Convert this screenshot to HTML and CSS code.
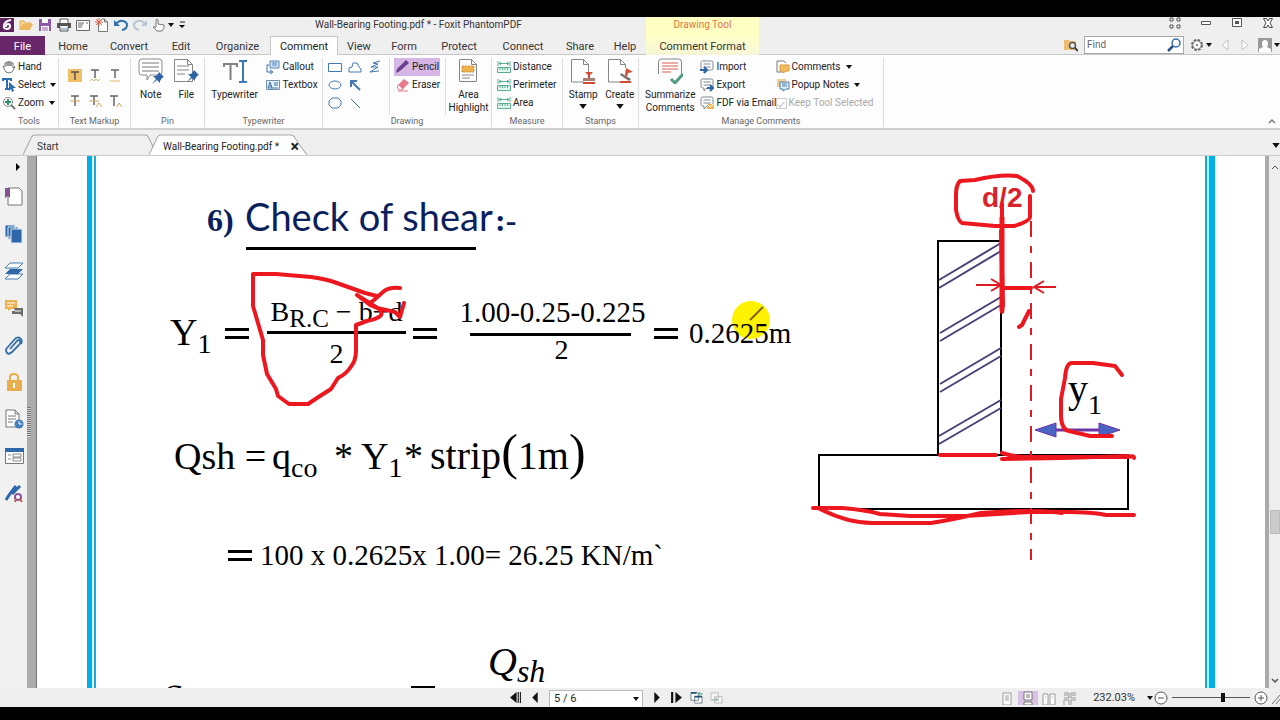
FILE: index.html
```html
<!DOCTYPE html>
<html lang="en">
<head>
<meta charset="utf-8">
<title>Wall-Bearing Footing.pdf * - Foxit PhantomPDF</title>
<link rel="stylesheet" href="styles.css">
</head>
<body>
<svg width="0" height="0" class="defs" aria-hidden="true">
  <symbol id="caret" viewBox="0 0 6 4"><path d="M0 0h6L3 4z" fill="#111"/></symbol>
  <symbol id="pin" viewBox="0 0 12 12"><path d="M7 0l5 5-2 1-2 3v2L5 8l-5 4 4-5L1 4h3l2-2z" fill="#2c64a5"/></symbol>
  <symbol id="ruler" viewBox="0 0 14 12"><path d="M1 0v5M13 0v5M2 2.500h10M4 1L2 2.500 4 4M10 1l2 1.500L10 4" stroke="#5aae92" fill="none"/><path d="M.5 6.500h13v5H.5zM3 7v2M5.500 7v2M8 7v2M10.500 7v2" stroke="#5aae92" fill="#e4f4ee"/></symbol>
  <symbol id="bubble" viewBox="0 0 14 14"><path d="M2.500 1h9Q13 1 13 2.500v6Q13 10 11.500 10H7l-3 3v-3H2.500Q1 10 1 8.500v-6Q1 1 2.500 1zM3.500 4h7M3.500 7h7" fill="#fff" stroke="#7c8792"/></symbol>
</svg>

<div class="app">
  <header>
    <div class="titlebar">
      <div class="quick">
        <svg viewBox="0 0 14 14"><path fill="#5c2560" d="M0 0h14v14H0z"/><path d="M11 2Q5 3 4 7q-1 4 3 4 3 0 3-3 0-2-2-2-2 0-2 3" fill="none" stroke="#fff" stroke-width="2"/></svg>
        <button aria-label="Open"><svg viewBox="0 0 14 14"><path d="M1 12V3h4l1 2h6v2" fill="#f6d596" stroke="#e5ac4e"/><path d="M1 12l3-6h10l-3 6z" fill="#edb75d"/></svg></button>
        <button aria-label="Save"><svg viewBox="0 0 14 14"><path d="M1 1h12v12H1z" fill="#8c5aa8"/><path d="M4 1h6v4H4zM3 8h8v5H3z" fill="#fff"/><path d="M4 10h6M4 12h6" stroke="#8c5aa8"/></svg></button>
        <button aria-label="Print"><svg viewBox="0 0 14 14"><path d="M3 5V1h8v4M3 9v4h8V9" fill="#fff" stroke="#555"/><path d="M0 5h14v5h-3V8H3v2H0z" fill="#555"/><path d="M4 11h6" stroke="#4d83bf"/></svg></button>
        <button aria-label="Email"><svg viewBox="0 0 14 14"><path d="M.5 2.500h13v10H.5zM2 5h6M2 7h5M2 9h4M10 5h2" fill="#fff" stroke="#666"/></svg></button>
        <button aria-label="Create"><svg viewBox="0 0 14 14"><path d="M3.500 5v8.500h9V4l-3-3H7M9.500 1v3h3" fill="#fff" stroke="#777"/><path d="M4 0v8M0 4h8M1 1l6 6M7 1L1 7" stroke="#d9604b"/></svg></button>
        <button aria-label="Undo"><svg viewBox="0 0 14 14"><path d="M2 6q3-4 7-3 4 1 4 4 0 4-5 5" fill="none" stroke="#2f70ad" stroke-width="2"/><path d="M0 2v6h6z" fill="#2f70ad"/></svg></button>
        <button aria-label="Redo"><svg viewBox="0 0 14 14"><path d="M12 6Q9 2 5 3 1 4 1 7q0 4 5 5" fill="none" stroke="#b9c5d3" stroke-width="2"/><path d="M14 2v6H8z" fill="#b9c5d3"/></svg></button>
        <button class="drop" aria-label="Touch mode"><svg viewBox="0 0 14 14"><path d="M4 9V2q1-2 2 0v4l6 1v3l-2 3H5L1 9q1-1 3 1" fill="#fff" stroke="#777"/></svg><svg class="caret"><use href="#caret"/></svg></button>
        <button aria-label="Customize" class="small"><svg viewBox="0 0 6 8"><path d="M1 1h5" stroke="#222"/><path d="M0 4h6L3 7z"/></svg></button>
      </div>
      <h1 class="apptitle">Wall-Bearing Footing.pdf * - Foxit PhantomPDF</h1>
      <div class="context-title">Drawing Tool</div>
      <div class="window-controls">
        <button aria-label="Layout"><svg viewBox="0 0 12 12"><g fill="none" stroke="#555"><path d="M1 1h3v3H1zM8 1h3v3H8zM1 8h3v3H1zM8 8h3v3H8z"/></g></svg></button>
        <button aria-label="Minimize"><svg viewBox="0 0 12 12"><path d="M1.500 4.500h9v3h-9z" fill="#fff" stroke="#555"/></svg></button>
        <button aria-label="Restore"><svg viewBox="0 0 12 12"><path d="M1.500 1.500h9v8h-9z" fill="#fff" stroke="#555"/><path d="M4 4h4v3H4z" fill="#555"/></svg></button>
        <button aria-label="Close"><svg viewBox="0 0 12 12"><path d="M1.500 1.500h3L6 4l1.500-2.500h3L8 6l2.500 4.500h-3L6 8l-1.500 2.500h-3L4 6z" fill="#fff" stroke="#444"/></svg></button>
      </div>
    </div>

    <div class="menubar">
      <nav class="menus">
        <button class="file">File</button><button>Home</button><button>Convert</button><button>Edit</button><button>Organize</button><button class="active">Comment</button><button>View</button><button>Form</button><button>Protect</button><button>Connect</button><button>Share</button><button>Help</button><button class="context">Comment Format</button>
      </nav>
      <div class="finder">
        <svg class="i14" viewBox="0 0 14 14"><path d="M0 2h5l1 1h6v9H0z" fill="#ecbd73"/><circle cx="8.500" cy="7.500" r="3" fill="#eee" stroke="#555" stroke-width="1.500"/><path d="M11 10l3 3" stroke="#444" stroke-width="2"/></svg>
        <label class="findbox"><input type="text" placeholder="Find" aria-label="Find"><svg class="i14" viewBox="0 0 14 14"><circle cx="9" cy="5" r="4" fill="#fff" stroke="#2f6db0" stroke-width="1.500"/><path d="M6 8l-5 5" stroke="#2b4f80" stroke-width="2.500"/></svg></label>
        <button class="drop" aria-label="Settings"><svg class="i14" viewBox="0 0 14 14"><circle cx="7" cy="7" r="5" fill="none" stroke="#666" stroke-width="2" stroke-dasharray="2.500 1.430"/><circle cx="7" cy="7" r="4.200" fill="#fff" stroke="#777"/><circle cx="7" cy="7" r="1" fill="#666"/></svg><svg class="caret"><use href="#caret"/></svg></button>
        <button aria-label="Previous"><svg class="i14" viewBox="0 0 14 14"><path d="M10 2v10L4 7z" fill="#fafafa" stroke="#c3c3c3"/></svg></button>
        <button aria-label="Next"><svg class="i14" viewBox="0 0 14 14"><path d="M4 2v10l6-5z" fill="#fafafa" stroke="#c3c3c3"/></svg></button>
        <button class="drop" aria-label="Account"><svg class="i14" viewBox="0 0 14 14"><path d="M0 0h14v14H0z" fill="#999"/><path d="M7 2q3 0 3 4 0 2-1 3l4 2v3H1v-3l4-2Q4 8 4 6q0-4 3-4z" fill="#fff"/></svg><svg class="caret"><use href="#caret"/></svg></button>
      </div>
    </div>
  </header>

  <section class="ribbon">
    <div class="group">
      <div class="body"><div class="stack">
        <button><svg class="i14" viewBox="0 0 14 14"><path d="M4 12L1 7q0-2 2 0V3q1-1 2 0v3-4q1-1 2 0v4-4q1-1 2 0v4-3q1-1 2 0v5q2-3 2-1l-3 5q-3 2-6 0z" fill="#fff" stroke="#777"/></svg>Hand</button>
        <button><svg class="i14" viewBox="0 0 14 14"><path d="M1 3V1h8v2M5 1v10M3 11h4" fill="none" stroke="#2c70ad" stroke-width="2"/><path d="M7 4v9l2-2 1 3 2-1-1-3h3z" fill="#2c70ad"/></svg>Select<svg class="caret"><use href="#caret"/></svg></button>
        <button><svg class="i14" viewBox="0 0 14 14"><circle cx="6" cy="6" r="4.500" fill="#fff" stroke="#888"/><path d="M3 6h6M6 3v6" stroke="#26936a" stroke-width="2"/><path d="M9 9l4 4" stroke="#777" stroke-width="2"/></svg>Zoom<svg class="caret"><use href="#caret"/></svg></button>
      </div></div>
      <h2>Tools</h2>
    </div>
    <div class="group">
      <div class="body"><div class="markup">
        <button aria-label="Highlight"><svg viewBox="0 0 14 14"><path d="M0 0h14v13H0z" fill="#f2bf69"/><path d="M3 3h8M7 3v8" stroke="#555" stroke-width="1.500"/></svg></button>
        <button aria-label="Squiggly"><svg viewBox="0 0 14 14"><path d="M3 1h8M7 1v8" stroke="#666" stroke-width="1.500"/><path d="M2 12l2-2 2 2 2-2 2 2 2-2" fill="none" stroke="#e3b86c"/></svg></button>
        <button aria-label="Underline"><svg viewBox="0 0 14 14"><path d="M3 1h8M7 1v8" stroke="#666" stroke-width="1.500"/><path d="M2 12h10" stroke="#e3b86c"/></svg></button>
        <button aria-label="Strikeout"><svg viewBox="0 0 14 14"><path d="M3 2h8M7 2v10" stroke="#666" stroke-width="1.500"/><path d="M2 7h10" stroke="#d4a45c"/></svg></button>
        <button aria-label="Replace"><svg viewBox="0 0 14 14"><path d="M2 2h8M6 2v9" stroke="#666" stroke-width="1.500"/><path d="M1 7h10M8 13l3-4 3 4" fill="none" stroke="#d4a45c"/></svg></button>
        <button aria-label="Insert"><svg viewBox="0 0 14 14"><path d="M2 2h8M6 2v10" stroke="#666" stroke-width="1.500"/><path d="M9 13l2-4 3 4" fill="none" stroke="#d4a45c"/></svg></button>
      </div></div>
      <h2>Text Markup</h2>
    </div>
    <div class="group">
      <div class="body bigs">
        <button class="big"><svg viewBox="0 0 26 26"><path d="M4 1h17q3 0 3 3v10q0 3-3 3h-9l-3 5v-5H4q-3 0-3-3V4q0-3 3-3z" fill="#fff" stroke="#8b8b8b"/><path d="M4 5h17M4 9h17M4 13h17" stroke="#777"/><use href="#pin" x="14" y="14" width="12" height="12"/></svg>Note</button>
        <button class="big"><svg viewBox="0 0 26 26"><path d="M1.500 1.500h13l5 5v17h-18zM14.500 1.500v5h5" fill="#fff" stroke="#858585"/><path d="M4 8h12M4 12h12M4 16h8" stroke="#858585"/><use href="#pin" x="14" y="12" width="12" height="12"/></svg>File</button>
      </div>
      <h2>Pin</h2>
    </div>
    <div class="group">
      <div class="body bigs">
        <button class="big"><svg viewBox="0 0 26 26"><path d="M2 6h13M8.500 6v16M2 5v4M15 5v4" stroke="#808080" stroke-width="2"/><path d="M17 3h3l1 1 1-1h3M21 4v19M17 24h3l1-1 1 1h3" fill="none" stroke="#3578b4" stroke-width="2"/></svg>Typewriter</button>
        <div class="stack">
          <button><svg class="i14" viewBox="0 0 14 14"><path d="M4 1h9v7H4zM6 3h5M6 5h5" fill="#cfe0f2" stroke="#5b87b8"/><path d="M3 5H1v7h5M4 10l3 2-3 2" fill="none" stroke="#3c70aa"/></svg>Callout</button>
          <button><svg class="i14" viewBox="0 0 14 14"><path d="M.5 2.500h13v9H.5z" fill="#e9f2fb" stroke="#6f8fb0"/><path d="M2 10l2-6 2 6M3 8h3M8 5h4M8 7h4M2 10h10" fill="none" stroke="#3c70aa"/></svg>Textbox</button>
        </div>
      </div>
      <h2>Typewriter</h2>
    </div>
    <div class="group">
      <div class="body drawing">
        <div class="shapes">
          <button aria-label="Rectangle"><svg viewBox="0 0 14 14"><path d="M.5 3.500h13v8H.5z"/></svg></button>
          <button aria-label="Polygon"><svg viewBox="0 0 14 14"><path d="M1 12V8l3-1 1-4h4l2 4 2 2v3z"/></svg></button>
          <button aria-label="Polyline"><svg viewBox="0 0 14 14"><path d="M12 1L5 3l5 1-7 3h7l-8 5 9-1"/></svg></button>
          <button aria-label="Oval"><svg viewBox="0 0 14 14"><ellipse cx="7" cy="7" rx="6" ry="4"/></svg></button>
          <button aria-label="Arrow"><svg viewBox="0 0 14 14"><path d="M12 12L3 3M3 9V3h6" stroke-width="2"/></svg></button>
          <i></i>
          <button aria-label="Circle"><svg viewBox="0 0 14 14"><path d="M4 2h6l3 3v4l-3 3H4L1 9V5z"/></svg></button>
          <button aria-label="Line"><svg viewBox="0 0 14 14"><path d="M3 3l9 9"/></svg></button>
        </div>
        <div class="stack pens">
          <button class="on"><svg class="i14" viewBox="0 0 14 14"><path d="M0 13l1-4 9-9 3 3-9 8z" fill="#6b3d8e"/></svg>Pencil</button>
          <button><svg class="i14" viewBox="0 0 14 14"><path d="M1 8l7-7 5 4-7 7H3z" fill="#e87988"/><path d="M3 7l4 4-1 1H3L1 9z" fill="#fff" stroke="#e87988"/><path d="M2 13h10" stroke="#e87988"/></svg>Eraser</button>
        </div>
        <button class="big area"><svg viewBox="0 0 26 26"><path d="M4.500 1.500h12l5 5v17h-17zM16.500 1.500v5h5" fill="#fff" stroke="#858585"/><path d="M7 8h12v6H7z" fill="#eeb250" stroke="#c98e34" stroke-dasharray="2 1"/><path d="M7 17h12M7 20h8" stroke="#858585"/></svg>Area<br>Highlight</button>
      </div>
      <h2>Drawing</h2>
    </div>
    <div class="group">
      <div class="body measure"><div class="stack">
        <button><svg class="i14"><use href="#ruler"/></svg>Distance</button>
        <button><svg class="i14"><use href="#ruler"/></svg>Perimeter</button>
        <button><svg class="i14"><use href="#ruler"/></svg>Area</button>
      </div></div>
      <h2>Measure</h2>
    </div>
    <div class="group">
      <div class="body bigs">
        <button class="big"><svg viewBox="0 0 26 26"><path d="M14 24H1.500V1.500h12l5 5V14M13.500 1.500v5h5" fill="#fff" stroke="#858585"/><path d="M15 14h8l-3 3v3h-2v-3z" fill="#d34a35"/><path d="M13 20h12v3H13z" fill="#a47e73"/><path d="M13 25h12" stroke="#d34a35" stroke-width="2"/></svg>Stamp<svg class="caret large"><use href="#caret"/></svg></button>
        <button class="big"><svg viewBox="0 0 26 26"><path d="M13 24H1.500V1.500h12l5 5V10M13.500 1.500v5h5" fill="#fff" stroke="#858585"/><path d="M19 10l7 4-5 1-1 4-2-2z" fill="#d34a35"/><path d="M14 15l10 6-2 2-9-6z" fill="#80706b"/><path d="M13 24h11" stroke="#d34a35" stroke-width="2"/></svg>Create<svg class="caret large"><use href="#caret"/></svg></button>
      </div>
      <h2>Stamps</h2>
    </div>
    <div class="group">
      <div class="body bigs manage">
        <button class="big"><svg viewBox="0 0 26 26"><path d="M1.500 16V4q0-3 3-3h17q3 0 3 3v12" fill="#fff" stroke="#858585"/><path d="M5 5h16M5 8h16M5 11h16M5 14h9" stroke="#d65e51"/><path d="M14 21l4 4 8-9" fill="none" stroke="#569b86" stroke-width="3"/></svg>Summarize<br>Comments</button>
        <div class="stack">
          <button><svg class="i14" viewBox="0 0 14 14"><use href="#bubble"/><path d="M0 10h6M4 7l3 3-3 3" fill="none" stroke="#2c64a5" stroke-width="2"/></svg>Import</button>
          <button><svg class="i14" viewBox="0 0 14 14"><use href="#bubble"/><path d="M7 10h6M10 7l3 3-3 3" fill="none" stroke="#2c64a5" stroke-width="2"/></svg>Export</button>
          <button><svg class="i14" viewBox="0 0 14 14"><use href="#bubble"/><path d="M7 8h7v5H7z" fill="#efb24e"/><path d="M7 8l3 3 4-3" fill="none" stroke="#fff"/></svg>FDF via Email</button>
        </div>
        <div class="stack">
          <button><svg class="i14" viewBox="0 0 14 14"><path d="M6 12H1V1h7l2 2" fill="#fff" stroke="#777"/><path d="M4 5h9v6h-3l-3 2v-2H4z" fill="#f2bd62" stroke="#d69a38"/></svg>Comments<svg class="caret"><use href="#caret"/></svg></button>
          <button><svg class="i14" viewBox="0 0 14 14"><path d="M1 1h9v8H1z" fill="#f2ce8c"/><path d="M4 4h9v7h-3l-3 2v-2H4zM6 6h5M6 8h5" fill="#e3f0f8" stroke="#477da9"/></svg>Popup Notes<svg class="caret"><use href="#caret"/></svg></button>
          <label class="keep"><input type="checkbox" checked disabled>Keep Tool Selected</label>
        </div>
      </div>
      <h2>Manage Comments</h2>
    </div>
    <button class="collapse" aria-label="Collapse ribbon"><svg viewBox="0 0 8 6"><path d="M1 5l3-3 3 3" fill="none" stroke="#777" stroke-width="1.500"/></svg></button>
  </section>

  <nav class="doctabs">
    <button class="doctab"><svg viewBox="0 0 134 20" preserveAspectRatio="none"><path d="M0 20L8 4q1-3 4-3h110q3 0 4 3l8 16" fill="#f0f0f0" stroke="#aaa"/></svg><span>Start</span></button>
    <button class="doctab current"><svg viewBox="0 0 162 20" preserveAspectRatio="none"><path d="M0 20L8 4q1-3 4-3h130q3 0 4 3l12 16" fill="#fff" stroke="#aaa"/></svg><span>Wall-Bearing Footing.pdf *</span><b>×</b></button>
    <button class="tablist" aria-label="Tab list"><svg class="caret large"><use href="#caret"/></svg></button>
  </nav>

  <main>
    <aside>
      <button aria-label="Expand" class="expand"><svg viewBox="0 0 6 8"><path d="M1 0v8l4-4z"/></svg></button>
      <button aria-label="Bookmarks"><svg viewBox="0 0 20 20"><path d="M4 1h11l3 3v14H4z" fill="#fff" stroke="#777"/><path d="M1 1h5v10l-2-2-3 2z" fill="#815391"/></svg></button>
      <button aria-label="Pages"><svg viewBox="0 0 20 20"><path d="M1 1h10v12H1zM4 3h10v12H4z" fill="#2f68a8" stroke="#dce8f4"/><path d="M7 5h11v14H7z" fill="#2f68a8" stroke="#dce8f4"/></svg></button>
      <button aria-label="Layers"><svg viewBox="0 0 20 20"><path d="M6 2h13l-5 5H1zM6 13h13l-5 5H1z" fill="#fff" stroke="#437bb6"/><path d="M6 8h13l-5 5H1z" fill="#2f68a8"/></svg></button>
      <button aria-label="Comments"><svg viewBox="0 0 20 20"><path d="M1 2h12v9H7l-3 2v-2H1z" fill="#edb352"/><path d="M3 5h8M3 8h6" stroke="#fff"/><path d="M10 10h9v9l-3-3H8v-3h3" fill="#6d6d6d"/><path d="M11 13h6" stroke="#fff"/></svg></button>
      <button aria-label="Attachments"><svg viewBox="0 0 20 20"><path d="M6 14l7-8q2-2 3 0 1 1-1 4l-7 7q-3 3-5 1-2-3 0-5l7-8q3-4 6-2 3 2 1 6" fill="none" stroke="#356fa9" stroke-width="1.800"/></svg></button>
      <button aria-label="Security"><svg viewBox="0 0 20 20"><path d="M6 9V5q0-3 4-3t4 3v4" fill="none" stroke="#eaae4c" stroke-width="2"/><path d="M3 8h15v11H3z" fill="#eaae4c"/><path d="M10 11v5" stroke="#fff" stroke-width="2"/></svg></button>
      <button aria-label="Signatures"><svg viewBox="0 0 20 20"><path d="M2 1h9l4 4v13H2zM11 1v4h4M4 7h8M4 10h8M4 13h5" fill="#fff" stroke="#777"/><circle cx="15" cy="15" r="4.500" fill="#427fbd"/><path d="M15 12v3h3" stroke="#fff" fill="none"/></svg></button>
      <button aria-label="Fields"><svg viewBox="0 0 20 20"><path d="M1.500 3.500h18v14h-18z" fill="#fff" stroke="#777"/><path d="M1 2h19v4H1z" fill="#2f68a8"/><path d="M4 9h3M4 13h3M9 8h8v3H9zM9 12h8v3H9z" stroke="#888" fill="#fff"/></svg></button>
      <button aria-label="Sign"><svg viewBox="0 0 20 20"><path d="M2 17l3-5 7-9M8 11l8-8" stroke="#2f68a8" stroke-width="3"/><circle cx="14" cy="14" r="3" fill="#fff" stroke="#8c5297" stroke-width="2"/><path d="M12 16l-1 3M16 16l2 3" stroke="#c05a55" stroke-width="2"/></svg></button>
    </aside>
    <div class="splitter"><i></i></div>

    <article class="sheet">
      <div class="rail"></div>
      <div class="canvas">
        <h2 class="heading"><b>6)</b><span>Check of shear</span><b>:-</b></h2>
        <hr class="underline">
        <div class="row y1">
          <div class="term">Y<sub>1</sub></div>
          <i class="equals"></i>
          <div class="fraction first"><div>B<sub>R.C</sub> − b−d</div><div>2</div></div>
          <i class="equals"></i>
          <div class="fraction second"><div>1.00-0.25-0.225</div><div>2</div></div>
          <i class="equals"></i>
          <div class="value"><span class="cursor"><svg viewBox="0 0 40 40"><circle cx="20" cy="20" r="19" fill="#fff200"/><path d="M19 20L32 7" stroke="#7c6520" stroke-width="2"/></svg></span><span class="result">0.2625m</span></div>
        </div>
        <div class="row qsh">
          <span>Qsh =</span><span>q<sub>co</sub></span><span>*</span><span>Y<sub>1</sub></span><span>*</span><span class="strip">strip<big>(</big>1m<big>)</big></span>
        </div>
        <div class="row force"><i class="equals"></i><span>100 x 0.2625x 1.00= 26.25 KN/m`</span></div>
        <div class="row numerator"><em>Q<sub>sh</sub></em></div>
        <div class="row stress"><em>q</em><i class="equals"></i></div>

        <svg class="diagram" viewBox="96 156 1109 532" fill="none">
          <g stroke="#000" stroke-width="2"><path d="M938 455V241h63v214M819 455h309v54H819z"/></g>
          <g stroke="#4b3f78" stroke-width="2"><path d="M939 280l62-37M939 288l62-37M940 333l61-36M940 341l61-36M940 384l61-36M940 392l61-36M939 436l62-36M939 444l62-36"/></g>
          <path d="M1031 221V560" stroke="#df1b22" stroke-width="2" stroke-dasharray="16 9 7 9"/>
          <path d="M976 285h25M991 279l10 6-10 6M1056 287h-22M1044 281l-10 6 10 6" stroke="#df1b22" stroke-width="2"/>
          <path d="M1054 430h48" stroke="#6d35a5" stroke-width="3"/>
          <path d="M1035 430l21-7v14zM1120 430l-21-7v14z" fill="#4865c4" stroke="#7032a0"/>
          <text x="982" y="207" class="half">d/2</text>
          <text x="1068" y="402" class="ylabel">y</text><text x="1088" y="414" class="ysub">1</text>
          <g stroke="#ed171f" stroke-width="4" stroke-linecap="round" stroke-linejoin="round">
            <path d="M254 274h22l35 3q14 2 23 5l31 11 12 3"/>
            <path d="M400 288q-12-1-17 4l-9 8-4 3M357 295l13 10 7 3 18 4 5 5 4-14M357 295l22 14q5 5 0 8-5 3-12 4l-11 4v26q0 10-6 17-4 6-12 10l-7 11-11 7-12 8h-19l-11-8-2-7-9-15-4-19v-15l-10-34v-32"/>
            <path d="M1033 191q0-7-16-15-17-2-42 4l-15 1q-4 4-4 14v15q2 11 6 13l33 3h19q17-5 16-10V196" />
            <path d="M1002 204v108M1001 231l2 75M1003 288h28M1029 311l-7 14-3 2" />
            <path d="M1002 218v92" stroke-width="5"/>
            <path d="M1122 375l-7-9-22-3h-21q-6 0-7 15l-4 21v18q1 13 8 14l21 5h22"/>
            <path d="M940 455h56M1002 453q12 4 24 4h102q6-2 6 1M1002 459l60-1 66-2"/>
            <path d="M813 508h29q24 2 38 6l30 2h55l65-4q58-1 76 3h28M820 509q28 14 52 14h59q20-3 50-10 49-4 81 0" />
          </g>
        </svg>
      </div>
      <div class="rail right"></div>
    </article>
    <div class="scrollbar"><svg viewBox="0 0 8 6"><path d="M1 5l3-3 3 3" fill="none" stroke="#555"/></svg><i></i><svg viewBox="0 0 8 6"><path d="M1 1l3 3 3-3" fill="none" stroke="#555" stroke-width="1.500"/></svg></div>
  </main>

  <footer>
    <div class="pager">
      <button aria-label="First page"><svg viewBox="0 0 12 12"><path d="M7 1v10L1 6zM8 1h1v10H8zM10 1h1v10h-1z" fill="#111"/></svg></button>
      <button aria-label="Previous page"><svg viewBox="0 0 12 12"><path d="M8 1v10L3 6z" fill="#111"/></svg></button>
      <label class="pagebox"><select aria-label="Page"><option>5 / 6</option></select><svg class="caret"><use href="#caret"/></svg></label>
      <button aria-label="Next page"><svg viewBox="0 0 12 12"><path d="M4 1v10l5-5z" fill="#111"/></svg></button>
      <button aria-label="Last page"><svg viewBox="0 0 12 12"><path d="M5 1v10l6-5zM1 1h2v10H1z" fill="#111"/></svg></button>
      <button aria-label="Previous view"><svg viewBox="0 0 14 14"><path d="M1 2h8v8H1zM5 6h8v7H5z" fill="#fff" stroke="#6c7f8a"/><path d="M1 2h6M5 6h8" stroke="#275273" stroke-width="2"/><path d="M14 3H9M11 1L9 3l2 2" fill="none" stroke="#44a37c"/></svg></button>
      <button aria-label="Next view"><svg viewBox="0 0 14 14"><path d="M1 2h8v8H1zM5 6h8v7H5z" fill="#f5f5f5" stroke="#bbb"/><path d="M3 9h5M6 7l2 2-2 2" fill="none" stroke="#88bfa4"/></svg></button>
    </div>
    <div class="viewtools">
      <div class="modes">
        <button aria-label="Single page"><svg viewBox="0 0 14 14"><path d="M3 2h8v12H3zM5 5h4M5 7h4M5 9h4" fill="#fff" stroke="#999"/></svg></button>
        <button class="on" aria-label="Continuous"><svg viewBox="0 0 14 14"><path d="M3 1h8v8H3zM3 11h8v3H3zM5 4h4M5 6h4" fill="#fff" stroke="#777"/></svg></button>
        <button aria-label="Facing"><svg viewBox="0 0 14 14"><path d="M1 3h5v11H1zM8 3h5v11H8zM3 6h1M10 6h1" fill="#fff" stroke="#999"/></svg></button>
        <button aria-label="Continuous facing"><svg viewBox="0 0 14 14"><path d="M1 2h5v5H1M13 2H8v5h5M1 14v-5h5v5M13 9H8v5M1 4h4M9 4h4" fill="none" stroke="#999"/></svg></button>
      </div>
      <output>232.03%</output>
      <svg class="caret"><use href="#caret"/></svg>
      <button aria-label="Zoom out"><svg viewBox="0 0 14 14"><circle cx="7" cy="7" r="6" fill="#fff" stroke="#555"/><path d="M4 7h6" stroke="#555"/></svg></button>
      <input type="range" min="0" max="100" value="66" aria-label="Zoom">
      <button aria-label="Zoom in"><svg viewBox="0 0 14 14"><circle cx="7" cy="7" r="6" fill="#fff" stroke="#555"/><path d="M4 7h6M7 4v6" stroke="#555"/></svg></button>
      <svg class="grip" viewBox="0 0 8 12"><path d="M0 12l8-9M4 12l4-5" stroke="#777"/></svg>
    </div>
  </footer>
</div>
</body>
</html>
```

FILE: styles.css
```css
* { box-sizing: border-box; }
body {
  margin: 0;
  background: #000;
  color: #333;
  font: 10px/16px Roboto, "Noto Sans", sans-serif;
}
button, input, select {
  font: inherit;
  color: inherit;
  margin: 0;
  padding: 0;
  border: 0;
  background: none;
}
svg { display: block; flex: none; }
h1, h2 { margin: 0; font: inherit; }
.defs { position: absolute; }
.i14 { width: 14px; height: 14px; }
.caret { width: 6px; height: 4px; }
.caret.large { width: 8px; height: 5px; }
.drop { display: flex; align-items: center; gap: 2px; }

.app {
  height: 100vh;
  padding: 17px 0 13px;
  display: flex;
  flex-direction: column;
  background-color: #000;
}
header, footer { background: #efefef; }

/* Title bar */
.titlebar { display: flex; height: 19px; }
.quick { display: flex; gap: 5px; width: 315px; align-items: center; padding-bottom: 3px; }
.quick svg:not(.caret) { width: 14px; height: 14px; }
.quick .small svg { width: 6px; height: 8px; }
.apptitle { width: 331px; white-space: nowrap; }
.context-title {
  width: 113px;
  text-align: center;
  color: #e0763c;
  background: #ffffc4;
}
.window-controls { margin-left: auto; display: flex; align-items: flex-start; gap: 19px; padding: 0 6px; }
.window-controls svg { width: 12px; height: 12px; }

/* Menu tabs */
.menubar {
  display: flex;
  justify-content: space-between;
  border-bottom: 1px solid #c6c6c6;
  height: 19px;
}
.menus {
  display: grid;
  grid-template-columns: 45px 56px 56px 48px 65px 68px 42px 48px 62px 66px 48px 42px 113px;
  font-size: 11px;
  height: 19px;
}
.menus button { padding-top: 2px; }
.menus .file { background: #672769; color: #fff; }
.menus .active {
  background: #fff;
  border: 1px solid #c6c6c6;
  border-bottom: 0;
  color: #222;
}
.menus .context { background: linear-gradient(#ffffc8, #f6f6d8); }
.finder { display: flex; align-items: center; gap: 6px; }
.findbox {
  display: flex;
  align-items: center;
  width: 100px;
  height: 18px;
  padding: 0 2px;
  background: #fff;
  border: 1px solid #aaa;
}
.findbox input { flex: 1; min-width: 0; outline: 0; }
.findbox input::placeholder { color: #666; opacity: 1; }

/* Ribbon */
.ribbon {
  display: grid;
  grid-template-columns: 59px 72px 74px 118px 169px 71px 76px 245px 1fr;
  height: 75px;
  background: #fdfdfd;
  border-bottom: 2px solid #cfcfcf;
}
.group {
  display: flex;
  flex-direction: column;
  margin: 3px 0 1px;
  border-right: 1px solid #dcdcdc;
}
.group .body { flex: 1; padding-left: 2px; }
.group h2 { text-align: center; font-size: 9px; line-height: 12px; color: #666; }
.stack { display: flex; flex-direction: column; align-items: flex-start; }
.stack button, .keep {
  display: flex;
  align-items: center;
  gap: 2px;
  height: 18px;
  white-space: nowrap;
  color: #222;
}
.stack .caret { margin-left: 3px; }
.markup {
  display: grid;
  grid-template-columns: 20px 20px 20px;
  row-gap: 11px;
  padding: 11px 4px 0;
}
.markup svg { width: 14px; height: 14px; margin: 0 auto; }
.bigs { display: flex; justify-content: space-around; }
.big {
  display: flex;
  flex-direction: column;
  align-items: center;
  line-height: 13px;
  color: #222;
}
.big > svg:first-child { width: 26px; height: 26px; margin-bottom: 4px; }
.big .caret { margin-top: 3px; }
.drawing { display: flex; }
.shapes {
  display: grid;
  grid-template-columns: 20px 20px 20px;
  grid-template-rows: 18px 18px 18px;
  align-items: center;
  width: 65px;
  padding-left: 3px;
  border-right: 1px solid #dcdcdc;
}
.shapes svg { width: 14px; height: 14px; fill: none; stroke: #4379b0; }
.pens { width: 56px; padding-left: 4px; border-right: 1px solid #dcdcdc; }
.pens button { width: 46px; padding-left: 2px; }
.pens .on { background: #d6b6e5; }
.drawing .area { margin: 0 auto; }
.group .measure { padding-left: 5px; }
.group .manage { justify-content: flex-start; gap: 5px; padding-left: 6px; }
.manage .stack:last-child { margin-left: -6px; }
.keep { color: #aaa; }
.keep input {
  appearance: none;
  width: 11px;
  height: 11px;
  border: 1px solid #ccc;
  background: #fff;
  display: grid;
  place-items: center;
}
.keep input::after {
  content: "";
  width: 3px;
  height: 6px;
  border: solid #bbb;
  border-width: 0 1px 1px 0;
  rotate: 40deg;
}
.collapse { justify-self: end; align-self: end; padding: 4px; }
.collapse svg { width: 8px; height: 6px; }

/* Document tabs */
.doctabs {
  display: flex;
  height: 26px;
  padding-left: 23px;
  background: #efefef;
  border-bottom: 1px solid #ccc;
  align-items: flex-end;
}
.doctab {
  position: relative;
  width: 126px;
  height: 21px;
  padding: 4px 0 0 14px;
  display: flex;
  align-items: center;
}
.doctab.current { width: 162px; padding-right: 12px; justify-content: space-between; color: #222; }
.doctab svg { position: absolute; left: 0; top: 0; width: 134px; height: 21px; }
.doctab.current svg { width: 162px; }
.doctab span, .doctab b { position: relative; white-space: nowrap; }
.doctab b { font-size: 16px; }
.tablist { margin: 0 0 7px auto; }

/* Workspace */
main { flex: 1; min-height: 0; display: flex; background: #fff; }
aside {
  width: 27px;
  padding-top: 7px;
  background: #f1f1f1;
  display: flex;
  flex-direction: column;
  align-items: center;
  overflow: hidden;
}
aside button { height: 37px; flex: none; display: grid; place-items: center; }
aside button svg { width: 20px; height: 20px; }
aside .expand { height: 15px; align-self: flex-end; padding-right: 6px; place-items: start; }
aside .expand svg { width: 6px; height: 8px; }
.splitter {
  width: 10px;
  background: #ababab;
  border-right: 1px solid #777;
  display: flex;
  align-items: center;
}
.splitter i {
  width: 4px;
  height: 30px;
  background: repeating-linear-gradient(#777 0 1px, #ccc 1px 2px);
}
.sheet { flex: 1; min-width: 0; display: flex; padding: 0 50px; overflow: hidden; }
.rail {
  flex: none;
  width: 9px;
  background: linear-gradient(90deg, #00aeea 0 5px, #d8fbff 5px 7px, #24a9d8 7px);
}
.rail.right {
  width: 10px;
  background: linear-gradient(90deg, #20a4c4 0 2px, #9ff 2px 4px, #00aeea 4px);
}
.canvas {
  position: relative;
  flex: 1;
  min-width: 0;
  color: #000;
  font-family: "Liberation Serif", serif;
}
.diagram { position: absolute; left: 0; top: 0; width: 1109px; height: 532px; }
.half { font: bold 28px "Liberation Sans", sans-serif; fill: #d9222a; }
.ylabel { font: 40px "Liberation Serif", serif; fill: #000; }
.ysub { font: 28px "Liberation Serif", serif; fill: #000; }

.heading {
  display: flex;
  align-items: baseline;
  padding: 36px 0 0 111px;
  color: #0a1f5c;
  line-height: 48px;
}
.heading b { font-size: 32px; }
.heading b:first-child { width: 38px; }
.heading span { font-family: Lato, sans-serif; font-size: 38px; width: 250px; }
.underline { width: 230px; height: 3px; margin: 3px 0 0 150px; border: 0; background: #000; }
.row { display: flex; align-items: center; white-space: nowrap; }
.row sub { vertical-align: baseline; position: relative; top: 8px; font-size: 28px; line-height: 0; }
.equals {
  width: 24px;
  height: 11px;
  border: solid #000;
  border-width: 3px 0;
}
.y1 {
  display: grid;
  grid-template-columns: 55px 42px 146px 46px 195px 35px auto;
  justify-content: start;
  margin: 46px 0 0 74px;
}
.term { font-size: 38px; line-height: 36px; padding-bottom: 2px; }
.fraction { text-align: center; font-size: 28px; line-height: 32px; }
.fraction.first { width: 139px; }
.fraction.first div:first-child { padding-bottom: 3px; border-bottom: 3px solid #000; }
.fraction.first div:last-child { padding-top: 4px; }
.fraction.first sub { font-size: 25px; top: 6px; }
.fraction.second { width: 187px; padding-bottom: 6px; }
.fraction.second div:first-child { font-size: 29px; padding-bottom: 5px; }
.fraction.second div:last-child {
  line-height: 28px;
  margin: 0 15px 0 11px;
  padding-left: 22px;
  border-top: 3px solid #000;
}
.value { position: relative; font-size: 29px; line-height: 32px; }
.cursor { position: absolute; left: 42px; top: -17px; }
.cursor svg { width: 40px; height: 40px; }
.result { position: relative; }

.qsh {
  display: grid;
  grid-template-columns: 98px 62px 27px 43px 26px auto;
  justify-content: start;
  margin: 64px 0 0 78px;
  font-size: 38px;
  line-height: 44px;
}
.strip { font-size: 40px; }
.qsh big { font-size: 50px; line-height: 0; }
.force { gap: 8px; margin: 61px 0 0 132px; font-size: 29px; line-height: 32px; }
.numerator { margin: 75px 0 0 392px; font-size: 40px; line-height: 32px; }
.numerator sub { font-size: 32px; top: 7px; }
.stress { height: 13px; overflow: hidden; align-items: flex-start; margin-left: 66px; font-size: 40px; line-height: 28px; }
.stress em { width: 249px; }
.stress .equals { flex: none; margin-top: 8px; }

.scrollbar {
  width: 15px;
  border-left: 4px solid #aaa;
  background: #eee;
  display: flex;
  flex-direction: column;
  align-items: center;
  justify-content: space-between;
  padding: 8px 0 4px;
}
.scrollbar svg { width: 8px; height: 6px; }
.scrollbar i { width: 10px; height: 24px; margin-top: 195px; background: #ccc; border: 1px solid #bbb; }

/* Status bar */
footer {
  display: flex;
  justify-content: space-between;
  height: 19px;
  padding-left: 509px;
  overflow: hidden;
}
.pager { display: flex; align-items: center; gap: 7px; }
.viewtools { display: flex; align-items: center; gap: 4px; }
.modes { display: flex; gap: 7px; }
.pager button svg { width: 13px; height: 13px; }
.pagebox { position: relative; width: 94px; height: 17px; align-self: flex-end; background: #fff; border: 1px solid #bbb; border-bottom: 0; }
.pagebox select { appearance: none; width: 100%; padding-left: 4px; color: #222; font-size: 11px; }
.pagebox .caret { position: absolute; right: 3px; top: 6px; }
.viewtools button svg { width: 14px; height: 14px; }
.viewtools .on { background: #d9c2e6; padding: 0 3px; margin: 0 -3px; }
.viewtools output { margin: 0 8px 0 12px; font-size: 11px; }
.viewtools input { appearance: none; width: 78px; height: 14px; background: linear-gradient(#555, #555) center / 100% 1px no-repeat; }
.viewtools input::-webkit-slider-thumb { appearance: none; width: 4px; height: 9px; background: #111; }
.viewtools .caret { margin-right: -3px; }
.grip { width: 8px; height: 12px; }
```
